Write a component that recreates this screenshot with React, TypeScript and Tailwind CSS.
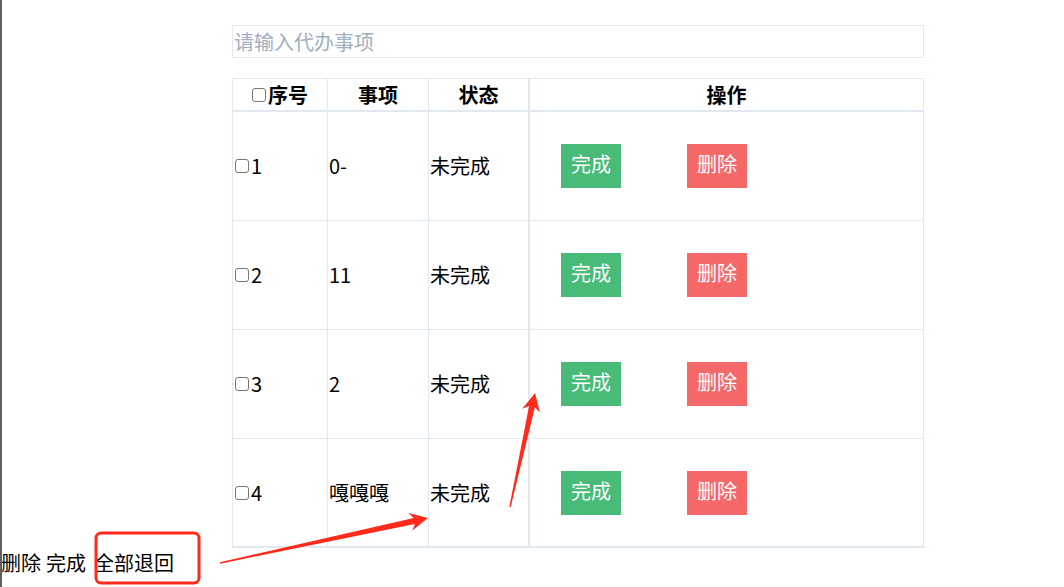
import React from "react";

const rows = [
  { id: 1, text: "0-" },
  { id: 2, text: "11" },
  { id: 3, text: "2" },
  { id: 4, text: "嘎嘎嘎" },
];

function Cb() {
  return (
    <span
      role="checkbox"
      aria-checked="false"
      className="block mr-[2px] w-[14px] h-[14px] shrink-0 border border-[#767676] rounded-[3px] bg-white"
    />
  );
}

export default function App() {
  return (
    <div className="relative w-[1064px] h-[587px] bg-white border-l-[2px] border-[#5f5f5f] overflow-hidden font-['Noto_Sans_CJK_SC','Noto_Sans',sans-serif] text-[20px] leading-[26px] text-black">
      <div className="pt-[25px] pl-[230px]">
        <input
          className="block w-[692px] h-[33px] border border-[#e2e8f0] px-[1px] text-[20px] outline-none placeholder:text-[#a0aec0]"
          placeholder="请输入代办事项"
        />
        <div className="mt-[20px] w-[692px] border-t border-x border-b-[2px] border-[#e2e8f0]">
          <div className="grid grid-cols-[95px_101px_101px_1fr] h-[33px] border-b-[2px] border-[#e2e8f0] font-bold">
            <div className="flex items-center justify-center border-r border-[#e2e8f0]">
              <Cb />
              <span>序号</span>
            </div>
            <div className="flex items-center justify-center border-r border-[#e2e8f0]">事项</div>
            <div className="flex items-center justify-center border-r-[2px] border-[#e2e8f0]">状态</div>
            <div className="flex items-center justify-center">操作</div>
          </div>
          {rows.map((r, i) => (
            <div
              key={r.id}
              className={
                i < rows.length - 1
                  ? "grid grid-cols-[95px_101px_101px_1fr] h-[109px] border-b border-[#e2e8f0]"
                  : "grid grid-cols-[95px_101px_101px_1fr] h-[107px]"
              }
            >
              <div className="flex items-center pl-[2px] border-r border-[#e2e8f0]">
                <Cb />
                <span>{r.id}</span>
              </div>
              <div className="flex items-center pl-[1px] border-r border-[#e2e8f0]">{r.text}</div>
              <div className="flex items-center pl-[1px] border-r-[2px] border-[#e2e8f0]">未完成</div>
              <div className="flex items-center pl-[31px] gap-[66px]">
                <button className="w-[60px] h-[44px] bg-[#48bb78] text-white text-[20px] leading-[26px] pb-[4px]">完成</button>
                <button className="w-[60px] h-[44px] bg-[#f56868] text-white text-[20px] leading-[26px] pb-[4px]">删除</button>
              </div>
            </div>
          ))}
        </div>
      </div>
      <div className="flex gap-[5px] pt-[2px] -ml-[1px]">
        <button className="text-[20px] leading-[26px]">删除</button>
        <button className="text-[20px] leading-[26px]">完成</button>
        <button className="text-[20px] leading-[26px] ml-[3px]">全部退回</button>
      </div>
      <svg className="absolute left-0 top-0 pointer-events-none" width="1064" height="587" viewBox="0 0 1064 587">
        <rect x="94" y="533" width="103" height="50" rx="5" fill="none" stroke="#ff2a1a" strokeWidth="3" />
        <polygon
          fill="#ff2a1a"
          points="218.1,563.7 412.9,523.9 410.3,530.6 426,518 406.5,513 411.7,518.1 217.9,562.3"
        />
        <polygon
          fill="#ff2a1a"
          points="508.7,507.1 532.9,407.3 537.9,412.5 533,393 520.3,408.7 527.1,406.1 507.3,506.9"
        />
      </svg>
    </div>
  );
}
